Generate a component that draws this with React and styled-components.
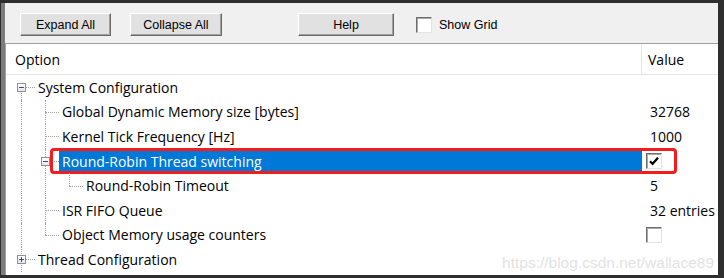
import React from "react";
import styled, { createGlobalStyle } from "styled-components";

const GlobalStyle = createGlobalStyle`
  html, body {
    margin: 0;
    padding: 0;
    background: #2e2e2e;
  }
  * { box-sizing: border-box; }
`;

const rows = [
  { label: "System Configuration", guides: [{ v: "bottom", h: true, exp: "minus" }] },
  { label: "Global Dynamic Memory size [bytes]", guides: [{ v: "full" }, { v: "full", h: true }], value: "32768" },
  { label: "Kernel Tick Frequency [Hz]", guides: [{ v: "full" }, { v: "full", h: true }], value: "1000" },
  {
    label: "Round-Robin Thread switching",
    guides: [{ v: "full" }, { v: "full", h: true, exp: "minus" }],
    check: true,
    selected: true,
    marked: true,
  },
  { label: "Round-Robin Timeout", guides: [{ v: "full" }, { v: "full" }, { v: "top", h: true }], value: "5" },
  { label: "ISR FIFO Queue", guides: [{ v: "full" }, { v: "full", h: true }], value: "32 entries" },
  { label: "Object Memory usage counters", guides: [{ v: "full" }, { v: "top", h: true }], check: false },
  { label: "Thread Configuration", guides: [{ v: "full", h: true, exp: "plus" }] },
];

const Expander = ({ type }) => (
  <ExpanderBox>
    <svg width="7" height="7" viewBox="0 0 7 7">
      <path d="M1 3.5H6" stroke="#2c4f8c" strokeWidth="1" />
      {type === "plus" && <path d="M3.5 1V6" stroke="#2c4f8c" strokeWidth="1" />}
    </svg>
  </ExpanderBox>
);

const CheckBox = ({ checked }) => (
  <Box>
    {checked && (
      <svg width="14" height="14" viewBox="0 0 14 14">
        <path d="M3 7.2 L5.6 9.8 L11 3.8" fill="none" stroke="#000" strokeWidth="2.2" />
      </svg>
    )}
  </Box>
);

const App = () => {
  return (
    <Frame>
      <GlobalStyle />
      <Window>
        <Toolbar>
          <Button $w={91}>Expand All</Button>
          <Button $w={92}>Collapse All</Button>
          <Button $w={96} $gap={57}>Help</Button>
          <GridToggle>
            <CheckBox />
            <span>Show Grid</span>
          </GridToggle>
        </Toolbar>
        <Panel>
          <Header>
            <HeadCell $first>Option</HeadCell>
            <HeadCell>Value</HeadCell>
          </Header>
          {rows.map((r) => (
            <Row key={r.label}>
              <OptionCell>
                {r.guides.map((g, i) => (
                  <Guide key={i} $v={g.v} $h={g.h}>
                    {g.exp && <Expander type={g.exp} />}
                  </Guide>
                ))}
                <Label $selected={r.selected}>{r.label}</Label>
              </OptionCell>
              <ValueCell>
                {r.value && <ValueText>{r.value}</ValueText>}
                {r.check !== undefined && <CheckBox checked={r.check} />}
              </ValueCell>
              {r.marked && <Marker />}
            </Row>
          ))}
        </Panel>
      </Window>
      <Watermark>https://blog.csdn.net/wallace89</Watermark>
    </Frame>
  );
};

const Frame = styled.div`
  position: relative;
  width: 724px;
  height: 278px;
  padding: 3px 6px 3px 1px;
  background: #2e2e2e;
  overflow: hidden;
`;

const Window = styled.div`
  height: 100%;
  display: flex;
  flex-direction: column;
  background: #f0f0f0;
  border-left: 4px solid #7c7c7c;
`;

const Toolbar = styled.div`
  height: 40px;
  display: flex;
  align-items: flex-start;
  padding: 10px 0 0 15px;
  font-family: "Liberation Sans", Arial, sans-serif;
  font-size: 12.5px;
  color: #000;
`;

const Button = styled.div`
  width: ${(p) => p.$w}px;
  height: 23px;
  margin-left: ${(p) => p.$gap || 0}px;
  margin-right: 19px;
  display: flex;
  align-items: center;
  justify-content: center;
  background: #e1e1e1;
  border-top: 1px solid #ffffff;
  border-left: 1px solid #ffffff;
  border-right: 1px solid #696969;
  border-bottom: 1px solid #696969;
  box-shadow: inset -1px -1px 0 #a0a0a0, inset 1px 1px 0 #e3e3e3;
`;

const GridToggle = styled.div`
  height: 23px;
  display: flex;
  align-items: center;
  gap: 7px;
  margin-left: 3px;
`;

const Box = styled.span`
  width: 16px;
  height: 16px;
  display: flex;
  align-items: center;
  justify-content: center;
  background: #fff;
  border-top: 1px solid #6e6e6e;
  border-left: 1px solid #6e6e6e;
  border-right: 1px solid #e3e3e3;
  border-bottom: 1px solid #e3e3e3;
  box-shadow: inset 1px 1px 0 #a8a8a8;
`;

const Panel = styled.div`
  flex: 1;
  background: #fff;
  border-top: 1px solid #a0a0a0;
  border-left: 1px solid #a0a0a0;
  font-family: "Open Sans", "Noto Sans", sans-serif;
  font-size: 14px;
  color: #000;
  overflow: hidden;
`;

const Header = styled.div`
  display: grid;
  grid-template-columns: 636px 1fr;
  height: 31px;
  border-bottom: 1px solid #e5e5e5;
`;

const HeadCell = styled.div`
  display: flex;
  align-items: center;
  padding-left: ${(p) => (p.$first ? 9 : 6)}px;
  border-right: ${(p) => (p.$first ? "1px solid #e5e5e5" : "none")};
`;

const Row = styled.div`
  position: relative;
  display: grid;
  grid-template-columns: 636px 1fr;
  height: 24.6px;
`;

const OptionCell = styled.div`
  display: flex;
  align-items: center;
  padding-left: 3px;
`;

const Guide = styled.span`
  position: relative;
  flex: 0 0 24px;
  align-self: stretch;
  &::before {
    content: "";
    display: ${(p) => (p.$v ? "block" : "none")};
    position: absolute;
    left: 12px;
    top: ${(p) => (p.$v === "bottom" ? "50%" : "0")};
    bottom: ${(p) => (p.$v === "top" ? "50%" : "0")};
    border-left: 1px dotted #a0a0a0;
  }
  &::after {
    content: "";
    display: ${(p) => (p.$h ? "block" : "none")};
    position: absolute;
    left: 12px;
    width: 14px;
    top: 50%;
    border-top: 1px dotted #a0a0a0;
  }
`;

const ExpanderBox = styled.span`
  position: absolute;
  z-index: 1;
  left: 8px;
  top: calc(50% - 4px);
  width: 9px;
  height: 9px;
  display: flex;
  align-items: center;
  justify-content: center;
  background: linear-gradient(#ffffff, #e6e6e6);
  border: 1px solid #919191;
`;

const Label = styled.span`
  flex: 1;
  height: 22px;
  display: flex;
  align-items: center;
  margin-left: 2px;
  padding-left: 3px;
  white-space: nowrap;
  background: ${(p) => (p.$selected ? "#0078d7" : "transparent")};
  color: ${(p) => (p.$selected ? "#fff" : "#000")};
`;

const ValueCell = styled.div`
  display: flex;
  align-items: center;
  padding-left: 4px;
`;

const ValueText = styled.span`
  margin-left: 4px;
`;

const Marker = styled.span`
  position: absolute;
  left: 44px;
  right: 41px;
  top: -1px;
  bottom: -1px;
  border: 3px solid #f41c1c;
  border-radius: 4px;
  pointer-events: none;
`;

const Watermark = styled.span`
  position: absolute;
  right: 10px;
  bottom: 6px;
  font-family: "Liberation Sans", Arial, sans-serif;
  font-size: 15.5px;
  color: #e2e2e2;
  pointer-events: none;
`;

export default App;
